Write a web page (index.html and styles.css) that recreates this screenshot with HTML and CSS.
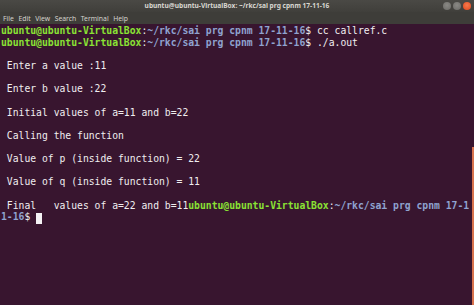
FILE: index.html
```html
<!DOCTYPE html>
<html>
<head>
<meta charset="utf-8">
<link rel="stylesheet" href="styles.css">
</head>
<body>
<div class="window">
  <div class="titlebar">
    <span class="title">ubuntu@ubuntu-VirtualBox: ~/rkc/sai prg cpnm 17-11-16</span>
    <div class="buttons">
      <span class="btn"></span>
      <span class="btn"></span>
      <span class="btn close"></span>
    </div>
  </div>
  <div class="menubar">
    <span>File</span><span>Edit</span><span>View</span><span>Search</span><span>Terminal</span><span>Help</span>
  </div>
  <div class="term">
    <div class="screen"><div class="line"><span class="u">ubuntu@ubuntu-VirtualBox</span>:<span class="p">~/rkc/sai prg cpnm 17-11-16</span>$ cc callref.c</div><div class="line"><span class="u">ubuntu@ubuntu-VirtualBox</span>:<span class="p">~/rkc/sai prg cpnm 17-11-16</span>$ ./a.out</div><div class="line"> </div><div class="line"> Enter a value :11</div><div class="line"> </div><div class="line"> Enter b value :22</div><div class="line"> </div><div class="line"> Initial values of a=11 and b=22</div><div class="line"> </div><div class="line"> Calling the function</div><div class="line"> </div><div class="line"> Value of p (inside function) = 22</div><div class="line"> </div><div class="line"> Value of q (inside function) = 11</div><div class="line"> </div><div class="line"> Final   values of a=22 and b=11<span class="u">ubuntu@ubuntu-VirtualBox</span>:<span class="p">~/rkc/sai prg cpnm 17-1</span></div><div class="line"><span class="p">1-16</span>$ <span class="cursor"> </span></div></div>
    <div class="edge"></div>
  </div>
</div>
</body>
</html>
```

FILE: styles.css
```css
html, body {
  margin: 0;
  padding: 0;
  background: #38152f;
}
.window {
  width: 474px;
  height: 305px;
  display: flex;
  flex-direction: column;
  overflow: hidden;
}
.titlebar {
  height: 12px;
  background: linear-gradient(#4a4945, #403f3b);
  position: relative;
  display: flex;
  align-items: center;
  justify-content: center;
}
.title {
  font-family: "Noto Sans", "DejaVu Sans", sans-serif;
  font-size: 6.6px;
  font-weight: bold;
  color: #d8d6d0;
  line-height: 12px;
}
.buttons {
  position: absolute;
  right: 3px;
  top: 2px;
  display: flex;
  gap: 2px;
}
.btn {
  width: 8px;
  height: 8px;
  border-radius: 50%;
  background: radial-gradient(circle at 50% 40%, #8a8985, #6a6965);
}
.btn.close {
  background: radial-gradient(circle at 50% 40%, #f57a4e, #e0461b);
}
.menubar {
  height: 12px;
  background: #3e3d39;
  display: flex;
  align-items: center;
  gap: 4.6px;
  padding-left: 3px;
  font-family: "Noto Sans", "DejaVu Sans", sans-serif;
  font-size: 6.8px;
  color: #d6d4ce;
}
.term {
  flex: 1;
  background: #38152f;
  position: relative;
  padding-top: 1.2px;
  padding-left: 1px;
}
.screen {
  font-family: "DejaVu Sans Mono", "Liberation Mono", monospace;
  font-size: 9.72px;
  line-height: 11.625px;
  color: #f0eef0;
  white-space: pre;
}
.line {
  height: 11.625px;
}
.u {
  color: #8ae234;
  font-weight: bold;
}
.p {
  color: #8fa3d0;
  font-weight: bold;
}
.cursor {
  background: #f4f2f4;
  display: inline-block;
  width: 5.85px;
  height: 11px;
  vertical-align: -2px;
}
.edge {
  position: absolute;
  right: 0;
  top: 123px;
  bottom: 0;
  width: 2px;
  background: #d8734e;
}
```
